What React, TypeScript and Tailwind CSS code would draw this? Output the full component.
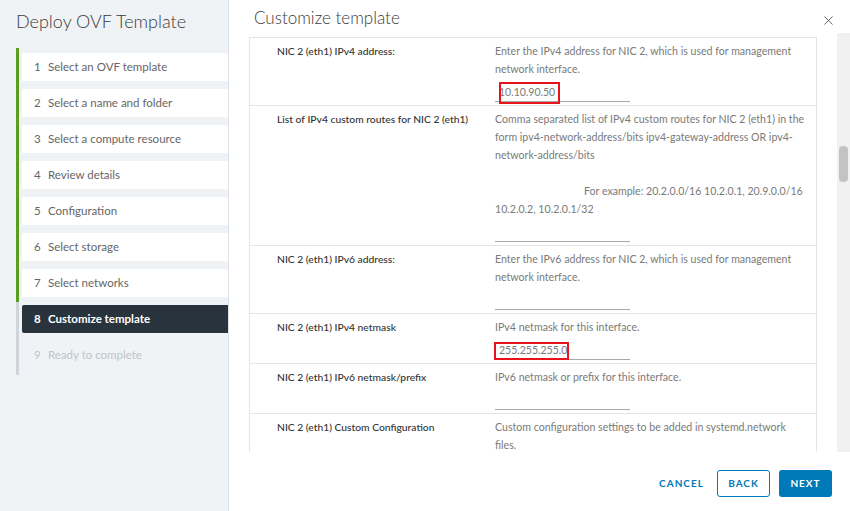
import React from "react";
import { X } from "lucide-react";

interface Step {
  n: number;
  label: string;
}

const steps: Step[] = [
  { n: 1, label: "Select an OVF template" },
  { n: 2, label: "Select a name and folder" },
  { n: 3, label: "Select a compute resource" },
  { n: 4, label: "Review details" },
  { n: 5, label: "Configuration" },
  { n: 6, label: "Select storage" },
  { n: 7, label: "Select networks" },
  { n: 8, label: "Customize template" },
  { n: 9, label: "Ready to complete" },
];

const ACTIVE = 8;

interface Field {
  label: string;
  lines: { text: string; indent?: boolean }[];
  value?: string;
  // red highlight box around the value, relative to the input
  mark?: "a" | "b";
  input?: boolean;
  last?: boolean;
}

const fields: Field[] = [
  {
    label: "NIC 2 (eth1) IPv4 address:",
    lines: [
      { text: "Enter the IPv4 address for NIC 2, which is used for management" },
      { text: "network interface." },
    ],
    value: "10.10.90.50",
    mark: "a",
    input: true,
  },
  {
    label: "List of IPv4 custom routes for NIC 2 (eth1)",
    lines: [
      { text: "Comma separated list of IPv4 custom routes for NIC 2 (eth1) in the" },
      { text: "form ipv4-network-address/bits ipv4-gateway-address OR ipv4-" },
      { text: "network-address/bits" },
      { text: "\u00a0" },
      { text: "For example: 20.2.0.0/16 10.2.0.1, 20.9.0.0/16", indent: true },
      { text: "10.2.0.2, 10.2.0.1/32" },
    ],
    input: true,
  },
  {
    label: "NIC 2 (eth1) IPv6 address:",
    lines: [
      { text: "Enter the IPv6 address for NIC 2, which is used for management" },
      { text: "network interface." },
    ],
    input: true,
  },
  {
    label: "NIC 2 (eth1) IPv4 netmask",
    lines: [{ text: "IPv4 netmask for this interface." }],
    value: "255.255.255.0",
    mark: "b",
    input: true,
  },
  {
    label: "NIC 2 (eth1) IPv6 netmask/prefix",
    lines: [{ text: "IPv6 netmask or prefix for this interface." }],
    input: true,
  },
  {
    label: "NIC 2 (eth1) Custom Configuration",
    lines: [
      { text: "Custom configuration settings to be added in systemd.network" },
      { text: "files." },
    ],
    last: true,
  },
];

function StepList() {
  return (
    <div className="flex pl-[16px] mt-[13px]">
      <div className="flex flex-col w-[3px]">
        <div className="h-[254px] bg-[#5a9e1f]" />
        <div className="h-[73px] bg-[#cfd5da]" />
      </div>
      <ul className="flex flex-col gap-[8px] pt-[5px] ml-[3px] flex-1">
        {steps.map((s) => {
          const done = s.n < ACTIVE;
          const active = s.n === ACTIVE;
          return (
            <li
              key={s.n}
              className={
                active
                  ? "h-[28px] flex items-center bg-[#29333e] text-white font-bold rounded-l-[2px]"
                  : done
                  ? "h-[28px] flex items-center bg-white text-[#666]"
                  : "h-[28px] flex items-center text-[#bfc4c8]"
              }
            >
              <span className="w-[26px] pl-[12px] text-[11.5px]">{s.n}</span>
              <span className="text-[11.5px]">{s.label}</span>
            </li>
          );
        })}
      </ul>
    </div>
  );
}

function ValueInput({ field }: { field: Field }) {
  return (
    <div className="relative w-[135px] h-[24px] border-b border-[#a8a8a8] flex items-end pb-[2px]">
      {field.value && (
        <span className="pl-[4px] text-[10.5px] leading-[14px] text-[#7a7a7a]">{field.value}</span>
      )}
      {field.mark === "a" && (
        <div className="absolute left-[4px] top-[4px] w-[61px] h-[22px] border-2 border-[#e8131b]" />
      )}
      {field.mark === "b" && (
        <div className="absolute left-[-1px] top-[6px] w-[75px] h-[18px] border-2 border-[#e8131b]" />
      )}
    </div>
  );
}

function FieldRow({ field }: { field: Field }) {
  return (
    <div
      className={
        field.last
          ? "flex pt-[4px] pb-[4px]"
          : "flex pt-[4px] pb-[3px] border-b border-[#e3e6e8]"
      }
    >
      <div className="w-[245px] pl-[27px] text-[10.3px] leading-[18px] text-[#333] font-medium">
        {field.label}
      </div>
      <div className="flex-1">
        {field.lines.map((l, i) => (
          <div
            key={i}
            className={
              l.indent
                ? "pl-[89px] whitespace-nowrap text-[10.6px] leading-[18px] text-[#7a7a7a]"
                : "whitespace-nowrap text-[10.6px] leading-[18px] text-[#7a7a7a]"
            }
          >
            {l.text}
          </div>
        ))}
        {field.input && <ValueInput field={field} />}
      </div>
    </div>
  );
}

export default function App() {
  return (
    <div
      className="w-[850px] h-[511px] flex bg-white overflow-hidden"
      style={{ fontFamily: "Lato, 'Noto Sans', sans-serif" }}
    >
      <aside className="w-[229px] shrink-0 bg-[#eff3f6] border-r border-[#dde3e8] flex flex-col">
        <h1 className="pl-[16px] pt-[9px] h-[35px] text-[18px] leading-[24px] text-[#3a3a3a] font-light">
          Deploy OVF Template
        </h1>
        <StepList />
      </aside>

      <main className="flex-1 flex flex-col min-w-0">
        <header className="h-[37px] shrink-0 flex items-start justify-between pl-[25px] pr-[14px]">
          <h2 className="pt-[6px] text-[17px] leading-[24px] text-[#3a3a3a] font-light">
            Customize template
          </h2>
          <button className="mt-[13px] text-[#555]">
            <X size={15} strokeWidth={1.4} />
          </button>
        </header>

        <div className="h-[415px] flex">
          <div className="ml-[20px] w-[568px] border-t border-l border-r border-[#e3e6e8] overflow-hidden">
            {fields.map((f, i) => (
              <FieldRow key={i} field={f} />
            ))}
          </div>
          <div className="ml-[20px] w-[13px] bg-[#f1f1f1] relative mt-[-4px]">
            <div className="absolute left-[2px] top-[113px] w-[9px] h-[36px] rounded-[4px] bg-[#c3c3c3]" />
          </div>
        </div>

        <footer className="flex-1 flex items-start justify-end gap-[9px] pt-[18px] pr-[18px]">
          <button className="w-[53px] h-[27px] text-[10px] font-bold tracking-[1px] text-[#0079b8]">
            CANCEL
          </button>
          <button className="w-[53px] h-[27px] rounded-[3px] border border-[#0079b8] text-[10px] font-bold tracking-[1px] text-[#0079b8]">
            BACK
          </button>
          <button className="w-[53px] h-[27px] rounded-[3px] bg-[#0079b8] text-[10px] font-bold tracking-[1px] text-white">
            NEXT
          </button>
        </footer>
      </main>
    </div>
  );
}
